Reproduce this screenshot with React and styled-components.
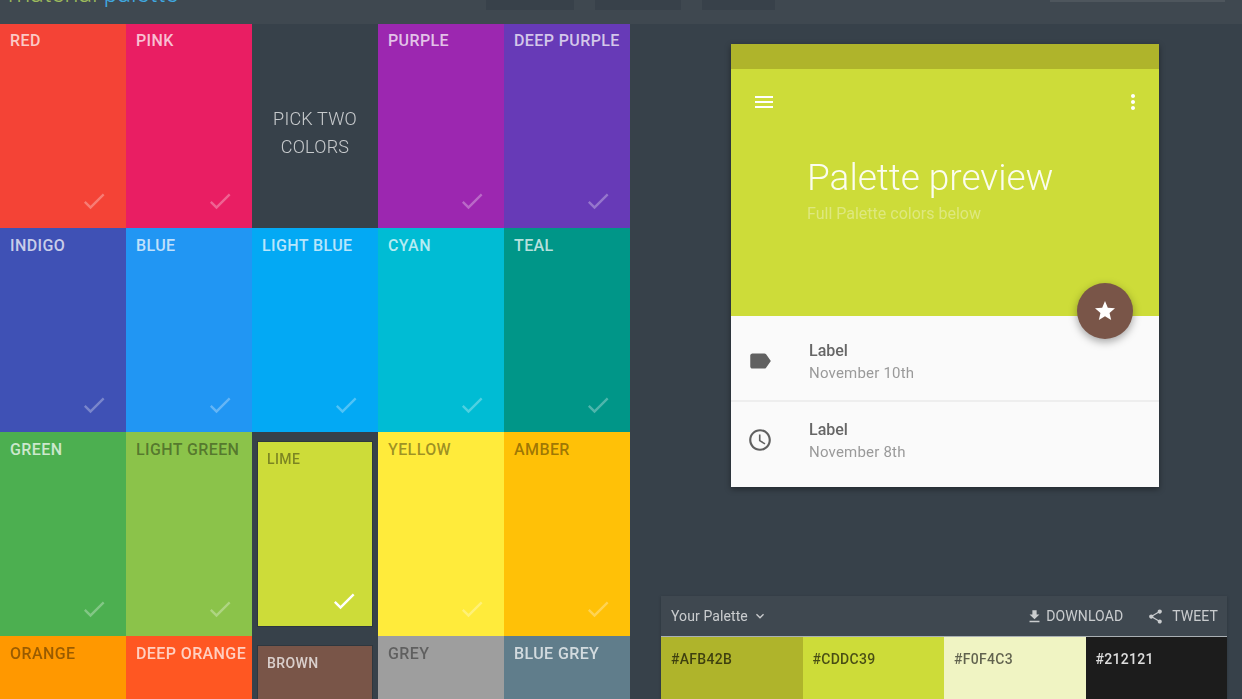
import React from 'react';
import styled, { createGlobalStyle } from 'styled-components';

const GlobalStyle = createGlobalStyle`
  html,
  body {
    margin: 0;
    padding: 0;
    background: #37414a;
    font-family: Roboto, "Liberation Sans", sans-serif;
  }
`;

const colors = [
  { name: 'Red', bg: '#f44336' },
  { name: 'Pink', bg: '#e91e63' },
  { pick: true },
  { name: 'Purple', bg: '#9c27b0' },
  { name: 'Deep Purple', bg: '#673ab7' },
  { name: 'Indigo', bg: '#3f51b5' },
  { name: 'Blue', bg: '#2196f3' },
  { name: 'Light Blue', bg: '#03a9f4' },
  { name: 'Cyan', bg: '#00bcd4' },
  { name: 'Teal', bg: '#009688' },
  { name: 'Green', bg: '#4caf50' },
  { name: 'Light Green', bg: '#8bc34a', dark: true },
  { name: 'Lime', bg: '#cddc39', dark: true, selected: true, checked: true },
  { name: 'Yellow', bg: '#ffeb3b', dark: true },
  { name: 'Amber', bg: '#ffc107', dark: true },
  { name: 'Orange', bg: '#ff9800', dark: true },
  { name: 'Deep Orange', bg: '#ff5722' },
  { name: 'Brown', bg: '#795548', selected: true },
  { name: 'Grey', bg: '#9e9e9e', dark: true },
  { name: 'Blue Grey', bg: '#607d8b' },
];

const swatches = [
  { hex: '#AFB42B', bg: '#afb42b', fg: 'rgba(0, 0, 0, 0.65)' },
  { hex: '#CDDC39', bg: '#cddc39', fg: 'rgba(0, 0, 0, 0.65)' },
  { hex: '#F0F4C3', bg: '#f0f4c3', fg: 'rgba(0, 0, 0, 0.6)' },
  { hex: '#212121', bg: '#1c1c1c', fg: 'rgba(255, 255, 255, 0.85)' },
];

const paths = {
  menu: 'M3 18h18v-2H3v2zm0-5h18v-2H3v2zm0-7v2h18V6H3z',
  more: 'M12 8c1.1 0 2-.9 2-2s-.9-2-2-2-2 .9-2 2 .9 2 2 2zm0 2c-1.1 0-2 .9-2 2s.9 2 2 2 2-.9 2-2-.9-2-2-2zm0 6c-1.1 0-2 .9-2 2s.9 2 2 2 2-.9 2-2-.9-2-2-2z',
  label: 'M17.63 5.84C17.27 5.33 16.67 5 16 5L5 5.01C3.9 5.01 3 5.9 3 7v10c0 1.1.9 1.99 2 1.99L16 19c.67 0 1.27-.33 1.63-.84L22 12l-4.37-6.16z',
  star: 'M12 17.27L18.18 21l-1.64-7.03L22 9.24l-7.19-.61L12 2 9.19 8.63 2 9.24l5.46 4.73L5.82 21z',
  clock: 'M11.99 2C6.47 2 2 6.48 2 12s4.47 10 9.99 10C17.52 22 22 17.52 22 12S17.52 2 11.99 2zM12 20c-4.42 0-8-3.58-8-8s3.58-8 8-8 8 3.58 8 8-3.58 8-8 8zm.5-13H11v6l5.25 3.15.75-1.23-4.5-2.67z',
  download: 'M19 9h-4V3H9v6H5l7 7 7-7zM5 18v2h14v-2H5z',
  share: 'M18 16.08c-.76 0-1.44.3-1.96.77L8.91 12.7c.05-.23.09-.46.09-.7s-.04-.47-.09-.7l7.05-4.11c.54.5 1.25.81 2.04.81 1.66 0 3-1.34 3-3s-1.34-3-3-3-3 1.34-3 3c0 .24.04.47.09.7L8.04 9.81C7.5 9.31 6.79 9 6 9c-1.66 0-3 1.34-3 3s1.34 3 3 3c.79 0 1.5-.31 2.04-.81l7.12 4.16c-.05.21-.08.43-.08.65 0 1.61 1.31 2.92 2.92 2.92 1.61 0 2.92-1.31 2.92-2.92s-1.31-2.92-2.92-2.92z',
  check: 'M9 16.17L4.83 12l-1.42 1.41L9 19 21 7l-1.41-1.41z',
  expand: 'M16.59 8.59L12 13.17 7.41 8.59 6 10l6 6 6-6z',
};

const Icon = ({ name, size = 24, color = 'currentColor' }) => (
  <svg width={size} height={size} viewBox="0 0 24 24" fill={color} style={{ display: 'block', flexShrink: 0 }}>
    <path d={paths[name]} />
  </svg>
);

const Page = styled.div`
  width: 1242px;
  height: 699px;
  overflow: hidden;
  display: flex;
  flex-direction: column;
  filter: blur(0.5px);
`;

const Header = styled.header`
  height: 24px;
  flex-shrink: 0;
  background: #3f4850;
  display: flex;
  overflow: hidden;
`;

const Logo = styled.div`
  width: 486px;
  box-sizing: border-box;
  padding-left: 8px;
  margin-top: -20px;
  font-size: 25px;
  line-height: 28px;
  font-weight: 300;
  color: #9dbb5c;

  span {
    color: #3fa9e0;
  }
`;

const HeaderTabs = styled.div`
  display: flex;
  width: 564px;
  gap: 21px;
`;

const HeaderTab = styled.div`
  width: ${(p) => p.$w}px;
  height: 10px;
  background: #38414a;
`;

const HeaderSliver = styled.div`
  width: 175px;
  height: 2px;
  background: rgba(255, 255, 255, 0.08);
`;

const Main = styled.main`
  flex: 1;
  display: flex;
  min-height: 0;
`;

const Grid = styled.div`
  width: 630px;
  flex-shrink: 0;
  display: grid;
  grid-template-columns: repeat(5, 126px);
  grid-auto-rows: 204px;
`;

const Cell = styled.div`
  position: relative;
  padding: ${(p) => (p.$selected ? '10px 6px' : '0')};
`;

const Tile = styled.div`
  position: relative;
  height: 100%;
  box-sizing: border-box;
  background: ${(p) => p.$bg};
  padding: ${(p) => (p.$first ? '8px' : '9px')} ${(p) => (p.$selected ? '9px' : '10px')};
  color: ${(p) => (p.$dark ? 'rgba(0, 0, 0, 0.4)' : 'rgba(255, 255, 255, 0.72)')};
  font-size: ${(p) => (p.$selected ? '14px' : '16px')};
  line-height: ${(p) => (p.$selected ? '16px' : '18px')};
  font-weight: 500;
  letter-spacing: 0.4px;
  text-transform: uppercase;
  white-space: nowrap;
  box-shadow: ${(p) => (p.$selected ? '0 0 0 1px rgba(0, 0, 0, 0.15)' : 'none')};
`;

const Check = styled.div`
  position: absolute;
  right: ${(p) => (p.$selected ? '14px' : '18px')};
  bottom: ${(p) => (p.$selected ? '11px' : '13px')};
  opacity: ${(p) => (p.$on ? 1 : 0.3)};
`;

const PickLabel = styled.div`
  height: 100%;
  display: flex;
  align-items: center;
  justify-content: center;
  text-align: center;
  padding-top: 14px;
  box-sizing: border-box;
  font-size: 18px;
  line-height: 28px;
  font-weight: 300;
  letter-spacing: 0.2px;
  text-transform: uppercase;
  color: rgba(255, 255, 255, 0.72);
`;

const Side = styled.section`
  flex: 1;
  display: flex;
  flex-direction: column;
  padding: 20px 15px 0 31px;
  min-width: 0;
`;

const Card = styled.article`
  position: relative;
  width: 428px;
  margin-left: 70px;
  background: #fafafa;
  box-shadow: 0 2px 6px rgba(0, 0, 0, 0.4);
`;

const StatusBar = styled.div`
  height: 25px;
  background: #afb42b;
`;

const Hero = styled.div`
  height: 247px;
  box-sizing: border-box;
  background: #cddc39;
  padding: 21px 14px 0 21px;
  color: #fff;
`;

const Toolbar = styled.div`
  display: flex;
  justify-content: space-between;
`;

const HeroTitle = styled.h1`
  margin: 42px 0 0 55px;
  font-size: 37px;
  line-height: 44px;
  font-weight: 300;
  color: rgba(255, 255, 255, 0.92);
`;

const HeroSub = styled.p`
  margin: 4px 0 0 55px;
  font-size: 16px;
  line-height: 20px;
  font-weight: 400;
  color: rgba(255, 255, 255, 0.35);
`;

const Fab = styled.div`
  position: absolute;
  top: 239px;
  right: 26px;
  width: 56px;
  height: 56px;
  border-radius: 50%;
  background: #795548;
  display: flex;
  align-items: center;
  justify-content: center;
  box-shadow: 0 3px 8px rgba(0, 0, 0, 0.35);
`;

const Row = styled.div`
  height: ${(p) => p.$h}px;
  box-sizing: border-box;
  display: flex;
  align-items: center;
  gap: 36px;
  padding: ${(p) => p.$pad};
  border-bottom: ${(p) => (p.$line ? '2px solid #eeeeee' : 'none')};
  color: #616161;
`;

const RowText = styled.div`
  display: flex;
  flex-direction: column;
  gap: 4px;
`;

const RowLabel = styled.div`
  font-size: 16px;
  line-height: 19px;
  font-weight: 500;
  color: #666666;
`;

const RowDate = styled.div`
  font-size: 15px;
  line-height: 18px;
  letter-spacing: 0.2px;
  color: #9a9a9a;
`;

const Palette = styled.section`
  margin-top: auto;
  height: 103px;
  flex-shrink: 0;
  display: flex;
  flex-direction: column;
  background: #3f4850;
  box-shadow: 0 1px 3px rgba(0, 0, 0, 0.2);
`;

const PaletteBar = styled.div`
  height: 41px;
  box-sizing: border-box;
  flex-shrink: 0;
  display: flex;
  align-items: center;
  padding: 0 9px 0 10px;
  border-bottom: 1px solid #aab0b4;
  color: rgba(255, 255, 255, 0.72);
  font-size: 14px;
  letter-spacing: 0.1px;
`;

const PaletteName = styled.div`
  display: flex;
  align-items: center;
  gap: 4px;
  margin-right: auto;
`;

const BarAction = styled.div`
  display: flex;
  align-items: center;
  gap: ${(p) => p.$gap}px;
  margin-left: 24px;
  text-transform: uppercase;
`;

const Swatches = styled.div`
  flex: 1;
  display: grid;
  grid-template-columns: repeat(4, 1fr);
`;

const Swatch = styled.div`
  background: ${(p) => p.$bg};
  color: ${(p) => p.$fg};
  padding: 14px 10px;
  font-size: 14px;
  line-height: 16px;
  font-weight: 500;
  letter-spacing: 0.3px;
`;

const App = () => (
  <Page>
    <GlobalStyle />
    <Header>
      <Logo>
        material <span>palette</span>
      </Logo>
      <HeaderTabs>
        <HeaderTab $w={88} />
        <HeaderTab $w={86} />
        <HeaderTab $w={73} />
      </HeaderTabs>
      <HeaderSliver />
    </Header>
    <Main>
      <Grid>
        {colors.map((c, i) => (
          <Cell key={c.name || i} $selected={c.selected}>
            {c.pick ? (
              <PickLabel>
                Pick two
                <br />
                colors
              </PickLabel>
            ) : (
              <Tile $bg={c.bg} $dark={c.dark} $selected={c.selected} $first={i < 5}>
                {c.name}
                {i < 15 && (
                  <Check $selected={c.selected} $on={c.checked}>
                    <Icon name="check" size={28} color="#fff" />
                  </Check>
                )}
              </Tile>
            )}
          </Cell>
        ))}
      </Grid>
      <Side>
        <Card>
          <StatusBar />
          <Hero>
            <Toolbar>
              <Icon name="menu" />
              <Icon name="more" />
            </Toolbar>
            <HeroTitle>Palette preview</HeroTitle>
            <HeroSub>Full Palette colors below</HeroSub>
          </Hero>
          <Fab>
            <Icon name="star" color="#fff" />
          </Fab>
          <Row $h={86} $line $pad="6px 0 0 16px">
            <Icon name="label" size={26} />
            <RowText>
              <RowLabel>Label</RowLabel>
              <RowDate>November 10th</RowDate>
            </RowText>
          </Row>
          <Row $h={85} $pad="0 0 9px 16px">
            <Icon name="clock" size={26} />
            <RowText>
              <RowLabel>Label</RowLabel>
              <RowDate>November 8th</RowDate>
            </RowText>
          </Row>
        </Card>
        <Palette>
          <PaletteBar>
            <PaletteName>
              Your Palette
              <Icon name="expand" size={16} />
            </PaletteName>
            <BarAction $gap={3}>
              <Icon name="download" size={17} />
              Download
            </BarAction>
            <BarAction $gap={8}>
              <Icon name="share" size={17} />
              Tweet
            </BarAction>
          </PaletteBar>
          <Swatches>
            {swatches.map((s) => (
              <Swatch key={s.hex} $bg={s.bg} $fg={s.fg}>
                {s.hex}
              </Swatch>
            ))}
          </Swatches>
        </Palette>
      </Side>
    </Main>
  </Page>
);

export default App;
